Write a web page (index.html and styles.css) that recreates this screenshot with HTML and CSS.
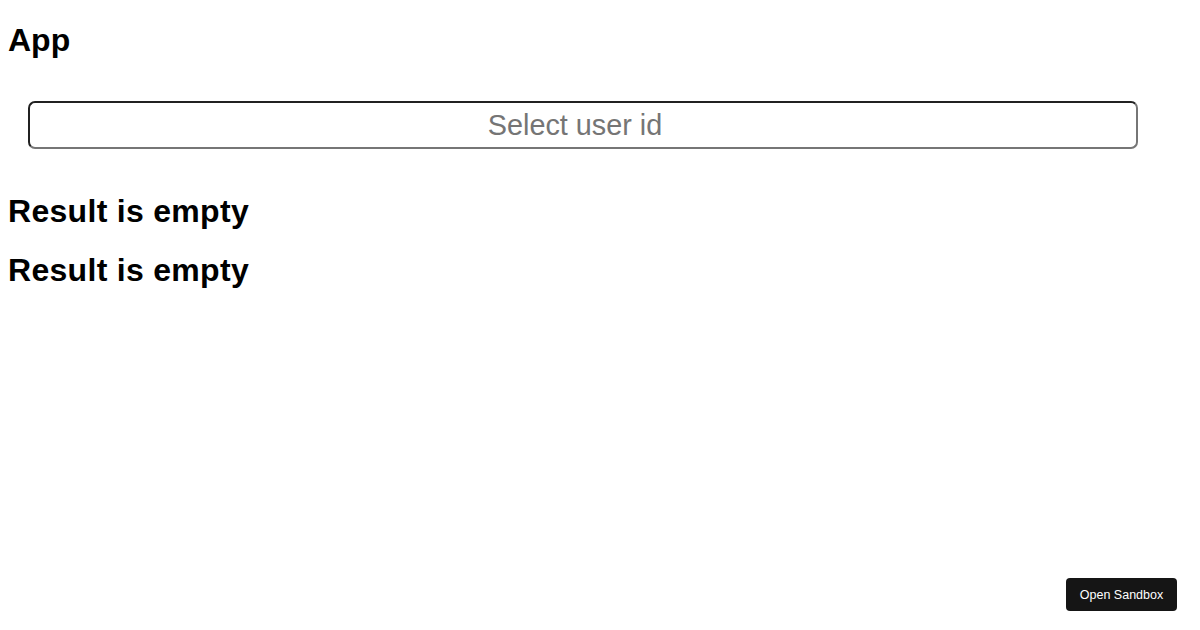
FILE: index.html
```html
<!DOCTYPE html>
<html lang="en">
<head>
  <meta charset="UTF-8" />
  <meta name="viewport" content="width=device-width, initial-scale=1.0"/>
  <title>App</title>
  <link rel="stylesheet" href="styles.css">
</head>
<body>
  <h1 class="title">App</h1>

  <div class="search">
    <input type="text" id="userId" placeholder="Select user id" />
  </div>

  <h1 class="result">Result is empty</h1>
  <h1 class="result">Result is empty</h1>

  <a class="sandbox-btn" href="#">Open Sandbox</a>
</body>
</html>
```

FILE: styles.css
```css
body {
  font-family: "Liberation Sans", Arial, sans-serif;
  margin: 8px;
  background: #fff;
  color: #000;
}
h1 {
  font-size: 32px;
  margin: 22.5px 0;
}
.title {
  margin: 14px 0 22px;
}
.result {
  letter-spacing: 0.3px;
}
.search {
  padding: 20px 20px 21px;
}
.search input {
  display: block;
  width: 1110px;
  height: 48px;
  box-sizing: border-box;
  margin: 0;
  padding: 0 18px 0 2px;
  font-family: "Liberation Sans", Arial, sans-serif;
  font-size: 28.8px;
  text-align: center;
  border: 2px inset rgb(118, 118, 118);
  border-radius: 7px;
}
.search input::placeholder {
  color: #757575;
}
.sandbox-btn {
  position: fixed;
  right: 23px;
  bottom: 19px;
  width: 111px;
  height: 33px;
  display: flex;
  align-items: center;
  justify-content: center;
  background: #151515;
  color: #fff;
  font-family: "Liberation Sans", Arial, sans-serif;
  font-size: 12.5px;
  text-decoration: none;
  border-radius: 4px;
}
```
